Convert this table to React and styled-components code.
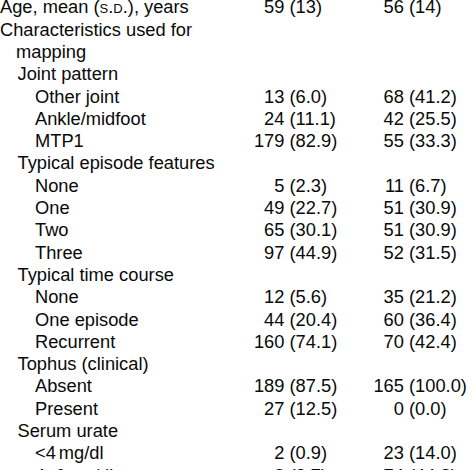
import React from 'react';
import styled, { createGlobalStyle } from 'styled-components';

const GlobalStyle = createGlobalStyle`
  html, body {
    margin: 0;
    padding: 0;
    background: #ffffff;
  }
  body {
    font-family: "Liberation Sans", Arial, Helvetica, sans-serif;
    color: #0a0a0a;
    overflow: hidden;
  }
`;

const Table = styled.div`
  display: grid;
  grid-template-columns: 250px 39.5px 75.5px 44px 1fr;
  font-size: 18.3px;
  line-height: 22.3px;
  margin-top: -3.6px;
  width: 474px;
  height: 474px;
  align-content: start;
`;

const Label = styled.div`
  grid-column: 1;
  padding-left: ${(props) => props.$level * 17.5 + (props.$hang ? 16 : 0)}px;
  text-indent: ${(props) => (props.$hang ? -16 : 0)}px;
  white-space: ${(props) => (props.$hang ? 'normal' : 'nowrap')};
`;

const Count = styled.div`
  text-align: right;
  padding-right: 5.1px;
  white-space: nowrap;
`;

const Pct = styled.div`
  text-align: left;
  white-space: nowrap;
`;

const Empty = styled.div`
  grid-column: 2 / span 4;
`;

const SmallCaps = styled.span`
  font-variant: small-caps;
`;

const Unit = styled.span`
  margin-left: 3px;
`;

const rows = [
  { label: <>Age, mean (<SmallCaps>s.d.</SmallCaps>), years</>, level: 0, a: ['59', '(13)'], b: ['56', '(14)'] },
  { label: 'Characteristics used for mapping', level: 0, hang: true },
  { label: 'Joint pattern', level: 1 },
  { label: 'Other joint', level: 2, a: ['13', '(6.0)'], b: ['68', '(41.2)'] },
  { label: 'Ankle/midfoot', level: 2, a: ['24', '(11.1)'], b: ['42', '(25.5)'] },
  { label: 'MTP1', level: 2, a: ['179', '(82.9)'], b: ['55', '(33.3)'] },
  { label: 'Typical episode features', level: 1 },
  { label: 'None', level: 2, a: ['5', '(2.3)'], b: ['11', '(6.7)'] },
  { label: 'One', level: 2, a: ['49', '(22.7)'], b: ['51', '(30.9)'] },
  { label: 'Two', level: 2, a: ['65', '(30.1)'], b: ['51', '(30.9)'] },
  { label: 'Three', level: 2, a: ['97', '(44.9)'], b: ['52', '(31.5)'] },
  { label: 'Typical time course', level: 1 },
  { label: 'None', level: 2, a: ['12', '(5.6)'], b: ['35', '(21.2)'] },
  { label: 'One episode', level: 2, a: ['44', '(20.4)'], b: ['60', '(36.4)'] },
  { label: 'Recurrent', level: 2, a: ['160', '(74.1)'], b: ['70', '(42.4)'] },
  { label: 'Tophus (clinical)', level: 1 },
  { label: 'Absent', level: 2, a: ['189', '(87.5)'], b: ['165', '(100.0)'] },
  { label: 'Present', level: 2, a: ['27', '(12.5)'], b: ['0', '(0.0)'] },
  { label: 'Serum urate', level: 1 },
  { label: <>&lt;4<Unit>mg/dl</Unit></>, level: 2, a: ['2', '(0.9)'], b: ['23', '(14.0)'] },
  { label: <>4–6<Unit>mg/dl</Unit></>, level: 2, a: ['8', '(3.7)'], b: ['74', '(44.8)'] },
];

export default function App() {
  return (
    <>
      <GlobalStyle />
      <Table>
        {rows.map((row, i) => (
          <React.Fragment key={i}>
            <Label $level={row.level} $hang={row.hang}>{row.label}</Label>
            {row.a ? (
              <>
                <Count>{row.a[0]}</Count>
                <Pct>{row.a[1]}</Pct>
                <Count>{row.b[0]}</Count>
                <Pct>{row.b[1]}</Pct>
              </>
            ) : (
              <Empty />
            )}
          </React.Fragment>
        ))}
      </Table>
    </>
  );
}
